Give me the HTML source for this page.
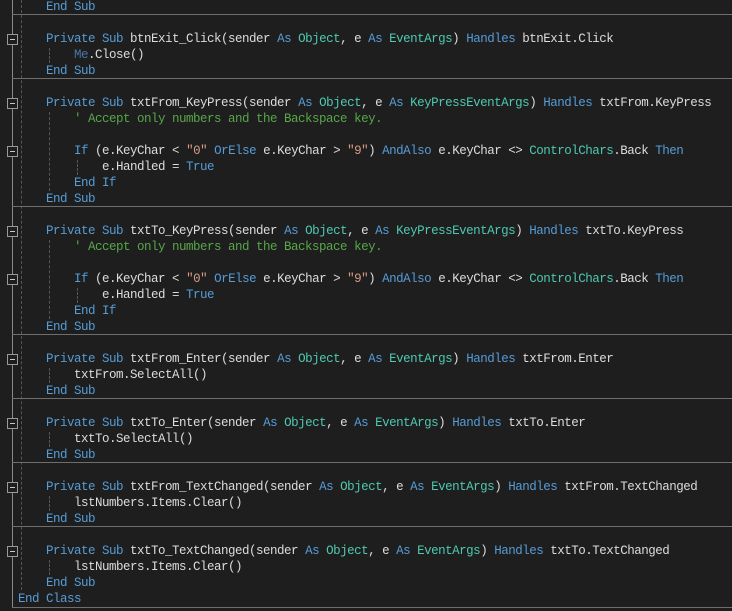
<!DOCTYPE html>
<html><head><meta charset="utf-8"><style>
html,body{margin:0;padding:0;background:#1e1e1e;width:732px;height:611px;overflow:hidden;position:relative}
.l{position:absolute;left:18px;height:16px;line-height:16px;font-family:"Liberation Mono",monospace;font-size:12.5px;letter-spacing:-0.5px;color:#dcdcdc;white-space:pre}
.k{color:#569cd6}.t{color:#4ec9b0}.c{color:#57a64a}.s{color:#d69d85}.m{color:#4a76a8}
.sep{position:absolute;left:12px;right:0;height:1px;background:#6e6e6e}
.vl{position:absolute;left:12px;width:1px;background:#8a8a8a}
.dv{position:absolute;width:0;border-left:1px dashed #555}
.fb{position:absolute;left:7px;width:9px;height:9px;border:1px solid #9a9a9a;background:#1e1e1e}
.fb:after{content:"";position:absolute;left:2px;top:4px;width:5px;height:1px;background:#c8c8c8}
</style></head><body>
<div class="vl" style="top:0;height:608px"></div>
<div class="dv" style="left:21px;top:0;height:590px"></div>
<div class="sep" style="top:14px"></div>
<div class="sep" style="top:78px"></div>
<div class="sep" style="top:206px"></div>
<div class="sep" style="top:334px"></div>
<div class="sep" style="top:398px"></div>
<div class="sep" style="top:462px"></div>
<div class="sep" style="top:526px"></div>
<div class="sep" style="top:607px"></div>
<div class="dv" style="left:49px;top:48px;height:15px"></div>
<div class="dv" style="left:49px;top:112px;height:79px"></div>
<div class="dv" style="left:77px;top:160px;height:15px"></div>
<div class="dv" style="left:49px;top:240px;height:79px"></div>
<div class="dv" style="left:77px;top:288px;height:15px"></div>
<div class="dv" style="left:49px;top:368px;height:15px"></div>
<div class="dv" style="left:49px;top:432px;height:15px"></div>
<div class="dv" style="left:49px;top:496px;height:15px"></div>
<div class="dv" style="left:49px;top:560px;height:15px"></div>
<div class="fb" style="top:34px"></div>
<div class="fb" style="top:98px"></div>
<div class="fb" style="top:146px"></div>
<div class="fb" style="top:226px"></div>
<div class="fb" style="top:274px"></div>
<div class="fb" style="top:354px"></div>
<div class="fb" style="top:418px"></div>
<div class="fb" style="top:482px"></div>
<div class="fb" style="top:546px"></div>

<div class="l" style="top:-1px">    <span class="k">End Sub</span></div>
<div class="l" style="top:31px">    <span class="k">Private Sub</span> btnExit_Click(sender <span class="k">As</span> <span class="t">Object</span>, e <span class="k">As</span> <span class="t">EventArgs</span>) <span class="k">Handles</span> btnExit.Click</div>
<div class="l" style="top:47px">        <span class="m">Me</span>.Close()</div>
<div class="l" style="top:63px">    <span class="k">End Sub</span></div>
<div class="l" style="top:95px">    <span class="k">Private Sub</span> txtFrom_KeyPress(sender <span class="k">As</span> <span class="t">Object</span>, e <span class="k">As</span> <span class="t">KeyPressEventArgs</span>) <span class="k">Handles</span> txtFrom.KeyPress</div>
<div class="l" style="top:111px">        <span class="c">' Accept only numbers and the Backspace key.</span></div>
<div class="l" style="top:143px">        <span class="k">If</span> (e.KeyChar &lt; <span class="s">"0"</span> <span class="k">OrElse</span> e.KeyChar &gt; <span class="s">"9"</span>) <span class="k">AndAlso</span> e.KeyChar &lt;&gt; <span class="t">ControlChars</span>.Back <span class="k">Then</span></div>
<div class="l" style="top:159px">            e.Handled = <span class="k">True</span></div>
<div class="l" style="top:175px">        <span class="k">End If</span></div>
<div class="l" style="top:191px">    <span class="k">End Sub</span></div>
<div class="l" style="top:223px">    <span class="k">Private Sub</span> txtTo_KeyPress(sender <span class="k">As</span> <span class="t">Object</span>, e <span class="k">As</span> <span class="t">KeyPressEventArgs</span>) <span class="k">Handles</span> txtTo.KeyPress</div>
<div class="l" style="top:239px">        <span class="c">' Accept only numbers and the Backspace key.</span></div>
<div class="l" style="top:271px">        <span class="k">If</span> (e.KeyChar &lt; <span class="s">"0"</span> <span class="k">OrElse</span> e.KeyChar &gt; <span class="s">"9"</span>) <span class="k">AndAlso</span> e.KeyChar &lt;&gt; <span class="t">ControlChars</span>.Back <span class="k">Then</span></div>
<div class="l" style="top:287px">            e.Handled = <span class="k">True</span></div>
<div class="l" style="top:303px">        <span class="k">End If</span></div>
<div class="l" style="top:319px">    <span class="k">End Sub</span></div>
<div class="l" style="top:351px">    <span class="k">Private Sub</span> txtFrom_Enter(sender <span class="k">As</span> <span class="t">Object</span>, e <span class="k">As</span> <span class="t">EventArgs</span>) <span class="k">Handles</span> txtFrom.Enter</div>
<div class="l" style="top:367px">        txtFrom.SelectAll()</div>
<div class="l" style="top:383px">    <span class="k">End Sub</span></div>
<div class="l" style="top:415px">    <span class="k">Private Sub</span> txtTo_Enter(sender <span class="k">As</span> <span class="t">Object</span>, e <span class="k">As</span> <span class="t">EventArgs</span>) <span class="k">Handles</span> txtTo.Enter</div>
<div class="l" style="top:431px">        txtTo.SelectAll()</div>
<div class="l" style="top:447px">    <span class="k">End Sub</span></div>
<div class="l" style="top:479px">    <span class="k">Private Sub</span> txtFrom_TextChanged(sender <span class="k">As</span> <span class="t">Object</span>, e <span class="k">As</span> <span class="t">EventArgs</span>) <span class="k">Handles</span> txtFrom.TextChanged</div>
<div class="l" style="top:495px">        lstNumbers.Items.Clear()</div>
<div class="l" style="top:511px">    <span class="k">End Sub</span></div>
<div class="l" style="top:543px">    <span class="k">Private Sub</span> txtTo_TextChanged(sender <span class="k">As</span> <span class="t">Object</span>, e <span class="k">As</span> <span class="t">EventArgs</span>) <span class="k">Handles</span> txtTo.TextChanged</div>
<div class="l" style="top:559px">        lstNumbers.Items.Clear()</div>
<div class="l" style="top:575px">    <span class="k">End Sub</span></div>
<div class="l" style="top:591px"><span class="k">End Class</span></div>
</body></html>
